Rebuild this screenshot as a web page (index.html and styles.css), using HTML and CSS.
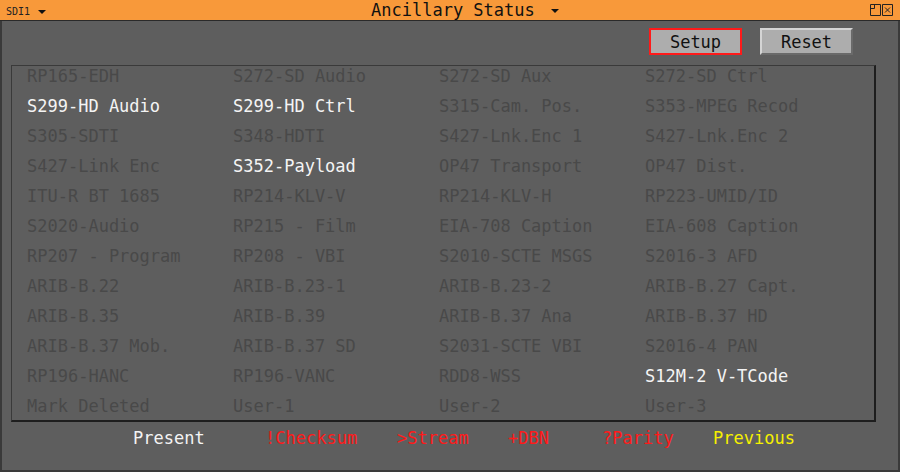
FILE: index.html
```html
<!DOCTYPE html>
<html lang="en">
<head>
  <meta charset="UTF-8">
  <title>Ancillary Status</title>
  <link rel="stylesheet" href="styles.css">
</head>
<body>

<div class="window">
  <div class="titlebar">
    <div class="source">SDI1 <span class="caret small"></span></div>
    <div class="title">Ancillary Status <span class="caret"></span></div>
    <div class="win-btns">
      <span class="win-btn">
        <svg width="11" height="12" viewBox="0 0 11 12"><path d="M0.5 11.5V0.5h10v11z M0.5 4.5h4v-4" fill="none" stroke="#222" stroke-width="1"/></svg>
      </span>
      <span class="win-btn">
        <svg width="11" height="12" viewBox="0 0 11 12"><path d="M0.5 0.5h10v11h-10z M3 3.5l5 5 M8 3.5l-5 5" fill="none" stroke="#222" stroke-width="1"/></svg>
      </span>
    </div>
  </div>

  <div class="content">
    <div class="toolbar">
      <button class="btn active">Setup</button>
      <button class="btn">Reset</button>
    </div>

    <div class="status-box">
      <span>RP165-EDH</span><span>S272-SD Audio</span><span>S272-SD Aux</span><span>S272-SD Ctrl</span>
      <span class="on">S299-HD Audio</span><span class="on">S299-HD Ctrl</span><span>S315-Cam. Pos.</span><span>S353-MPEG Recod</span>
      <span>S305-SDTI</span><span>S348-HDTI</span><span>S427-Lnk.Enc 1</span><span>S427-Lnk.Enc 2</span>
      <span>S427-Link Enc</span><span class="on">S352-Payload</span><span>OP47 Transport</span><span>OP47 Dist.</span>
      <span>ITU-R BT 1685</span><span>RP214-KLV-V</span><span>RP214-KLV-H</span><span>RP223-UMID/ID</span>
      <span>S2020-Audio</span><span>RP215 - Film</span><span>EIA-708 Caption</span><span>EIA-608 Caption</span>
      <span>RP207 - Program</span><span>RP208 - VBI</span><span>S2010-SCTE MSGS</span><span>S2016-3 AFD</span>
      <span>ARIB-B.22</span><span>ARIB-B.23-1</span><span>ARIB-B.23-2</span><span>ARIB-B.27 Capt.</span>
      <span>ARIB-B.35</span><span>ARIB-B.39</span><span>ARIB-B.37 Ana</span><span>ARIB-B.37 HD</span>
      <span>ARIB-B.37 Mob.</span><span>ARIB-B.37 SD</span><span>S2031-SCTE VBI</span><span>S2016-4 PAN</span>
      <span>RP196-HANC</span><span>RP196-VANC</span><span>RDD8-WSS</span><span class="on">S12M-2 V-TCode</span>
      <span>Mark Deleted</span><span>User-1</span><span>User-2</span><span>User-3</span>
    </div>

    <div class="legend">
      <span class="present">Present</span>
      <span class="err checksum">!Checksum</span>
      <span class="err stream">&gt;Stream</span>
      <span class="err dbn">+DBN</span>
      <span class="err parity">?Parity</span>
      <span class="prev">Previous</span>
    </div>
  </div>
</div>

</body>
</html>
```

FILE: styles.css
```css
* {
  box-sizing: border-box;
  margin: 0;
  padding: 0;
}

body {
  width: 900px;
  height: 472px;
  overflow: hidden;
  background: #5e5e5e;
  font-family: "DejaVu Sans Mono", "Liberation Mono", monospace;
}

.window {
  width: 900px;
  height: 472px;
  display: flex;
  flex-direction: column;
  border: 2px solid #3a3a3a;
  border-top: none;
}

.titlebar {
  height: 21px;
  background: #f8993a;
  border-bottom: 1px solid #2a2a2a;
  display: flex;
  align-items: center;
  margin: 0 -2px;
}

.source {
  font-size: 10px;
  color: #222;
  padding-left: 6px;
  padding-top: 3px;
  width: 60px;
}

.title {
  flex: 1;
  font-size: 17px;
  color: #111;
  padding-left: 311px;
  white-space: nowrap;
}

.caret {
  display: inline-block;
  width: 0;
  height: 0;
  border-left: 4px solid transparent;
  border-right: 4px solid transparent;
  border-top: 4px solid #111;
  margin-left: 6px;
  vertical-align: middle;
}

.caret.small {
  margin-left: 2px;
}

.win-btns {
  display: flex;
  gap: 1px;
  padding-right: 7px;
  width: 100px;
  justify-content: flex-end;
}

.win-btn {
  display: flex;
}

.content {
  flex: 1;
  padding: 7px 22px 0 9px;
}

.toolbar {
  display: flex;
  justify-content: flex-end;
  gap: 18px;
  padding-right: 23px;
}

.btn {
  width: 93px;
  height: 27px;
  background: #adadad;
  border: 2px solid;
  border-color: #d4d4d4 #6a6a6a #6a6a6a #d4d4d4;
  font-family: inherit;
  font-size: 17px;
  color: #111;
}

.btn.active {
  border-color: #ff1a1a;
}

.status-box {
  margin-top: 10px;
  height: 357px;
  border: 1px solid #3a3a3a;
  border-right: 2px solid #1e1e1e;
  border-bottom: 2px solid #1e1e1e;
  display: grid;
  grid-template-columns: repeat(4, 206px);
  grid-auto-rows: 20px;
  row-gap: 10px;
  padding: 0 0 0 15px;
  font-size: 17px;
  line-height: 20px;
  color: #494949;
  white-space: nowrap;
}

.status-box .on {
  color: #f4f4f4;
}

.legend {
  display: flex;
  padding-left: 122px;
  margin-top: 7px;
  font-size: 17px;
  line-height: 18px;
  white-space: nowrap;
}

.present {
  color: #f4f4f4;
  width: 132px;
}

.checksum {
  width: 132px;
}

.stream {
  width: 111px;
}

.dbn {
  width: 94px;
}

.parity {
  width: 111px;
}

.err {
  color: #ff1a1a;
}

.prev {
  color: #f5f000;
}
```
